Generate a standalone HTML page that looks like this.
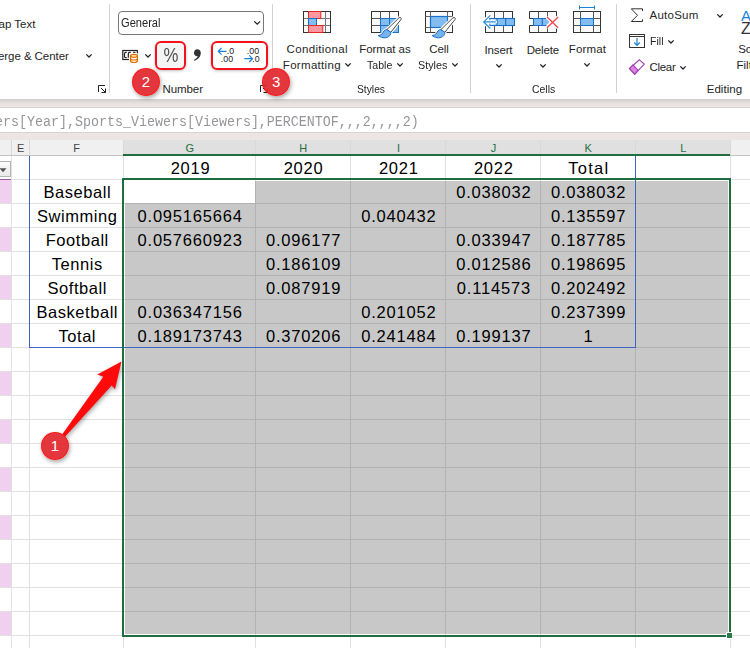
<!DOCTYPE html>
<html lang="en"><head><meta charset="utf-8"><title>Excel</title>
<style>
html,body{margin:0;padding:0;}
body{width:750px;height:648px;overflow:hidden;position:relative;background:#fff;font-family:"Liberation Sans",sans-serif;color:#222;}
.abs{position:absolute;}
svg{position:absolute;overflow:visible;}
.rt{position:absolute;font-size:11.5px;line-height:14px;color:#262626;white-space:nowrap;}
.sep{position:absolute;width:1px;background:#d2d2d2;top:4px;height:89px;}
.cell{position:absolute;height:24px;line-height:24px;font-size:16.5px;color:#000;white-space:nowrap;}
.hdr{position:absolute;top:140px;height:15px;line-height:16px;font-size:11px;text-align:center;color:#444;}
.hl{position:absolute;background:#e1e1e1;}
.gl{position:absolute;background:#b2b2b2;}
.badge{position:absolute;width:26.4px;height:26.4px;border-radius:50%;background:rgba(226,38,45,.92);border:1.8px solid rgba(255,22,22,.96);color:#fff;font-size:15px;line-height:26px;text-indent:0.6px;text-align:center;box-shadow:1px 2px 4px rgba(0,0,0,.35);}
.redbox{position:absolute;border:2px solid #f5111c;border-radius:6px;box-sizing:border-box;box-shadow:0 1px 3px rgba(0,0,0,.25);}
</style></head><body>

<div class="abs" style="left:0;top:180px;width:11px;height:23px;background:#f1cfee;"></div>
<div class="abs" style="left:0;top:228px;width:11px;height:23px;background:#f1cfee;"></div>
<div class="abs" style="left:0;top:276px;width:11px;height:23px;background:#f1cfee;"></div>
<div class="abs" style="left:0;top:324px;width:11px;height:23px;background:#f1cfee;"></div>
<div class="abs" style="left:0;top:372px;width:11px;height:23px;background:#f1cfee;"></div>
<div class="abs" style="left:0;top:420px;width:11px;height:23px;background:#f1cfee;"></div>
<div class="abs" style="left:0;top:468px;width:11px;height:23px;background:#f1cfee;"></div>
<div class="abs" style="left:0;top:516px;width:11px;height:23px;background:#f1cfee;"></div>
<div class="abs" style="left:0;top:564px;width:11px;height:23px;background:#f1cfee;"></div>
<div class="abs" style="left:0;top:612px;width:11px;height:23px;background:#f1cfee;"></div>
<div class="abs" style="left:0;top:140px;width:750px;height:15px;background:#f0f0f0;"></div>
<div class="abs" style="left:123px;top:140px;width:607px;height:15px;background:#e0e0e0;"></div>
<div class="abs" style="left:125px;top:181px;width:603px;height:453px;background:#c8c8c8;"></div>
<div class="abs" style="left:125px;top:180px;width:130px;height:23px;background:#fff;"></div>
<div class="hl" style="left:0;top:179px;width:750px;height:1px;"></div>
<div class="hl" style="left:0;top:203px;width:750px;height:1px;"></div>
<div class="hl" style="left:0;top:227px;width:750px;height:1px;"></div>
<div class="hl" style="left:0;top:251px;width:750px;height:1px;"></div>
<div class="hl" style="left:0;top:275px;width:750px;height:1px;"></div>
<div class="hl" style="left:0;top:299px;width:750px;height:1px;"></div>
<div class="hl" style="left:0;top:323px;width:750px;height:1px;"></div>
<div class="hl" style="left:0;top:347px;width:750px;height:1px;"></div>
<div class="hl" style="left:0;top:371px;width:750px;height:1px;"></div>
<div class="hl" style="left:0;top:395px;width:750px;height:1px;"></div>
<div class="hl" style="left:0;top:419px;width:750px;height:1px;"></div>
<div class="hl" style="left:0;top:443px;width:750px;height:1px;"></div>
<div class="hl" style="left:0;top:467px;width:750px;height:1px;"></div>
<div class="hl" style="left:0;top:491px;width:750px;height:1px;"></div>
<div class="hl" style="left:0;top:515px;width:750px;height:1px;"></div>
<div class="hl" style="left:0;top:539px;width:750px;height:1px;"></div>
<div class="hl" style="left:0;top:563px;width:750px;height:1px;"></div>
<div class="hl" style="left:0;top:587px;width:750px;height:1px;"></div>
<div class="hl" style="left:0;top:611px;width:750px;height:1px;"></div>
<div class="hl" style="left:0;top:635px;width:750px;height:1px;"></div>
<div class="hl" style="left:0;top:659px;width:750px;height:1px;"></div>
<div class="hl" style="left:11px;top:155px;width:1px;height:493px;"></div>
<div class="hl" style="left:29px;top:155px;width:1px;height:493px;"></div>
<div class="hl" style="left:123px;top:155px;width:1px;height:493px;"></div>
<div class="hl" style="left:255px;top:155px;width:1px;height:493px;"></div>
<div class="hl" style="left:350px;top:155px;width:1px;height:493px;"></div>
<div class="hl" style="left:445px;top:155px;width:1px;height:493px;"></div>
<div class="hl" style="left:540px;top:155px;width:1px;height:493px;"></div>
<div class="hl" style="left:635px;top:155px;width:1px;height:493px;"></div>
<div class="hl" style="left:730px;top:155px;width:1px;height:493px;"></div>
<div class="gl" style="left:125px;top:203px;width:603px;height:1px;"></div>
<div class="gl" style="left:125px;top:227px;width:603px;height:1px;"></div>
<div class="gl" style="left:125px;top:251px;width:603px;height:1px;"></div>
<div class="gl" style="left:125px;top:275px;width:603px;height:1px;"></div>
<div class="gl" style="left:125px;top:299px;width:603px;height:1px;"></div>
<div class="gl" style="left:125px;top:323px;width:603px;height:1px;"></div>
<div class="gl" style="left:125px;top:347px;width:603px;height:1px;"></div>
<div class="gl" style="left:125px;top:371px;width:603px;height:1px;"></div>
<div class="gl" style="left:125px;top:395px;width:603px;height:1px;"></div>
<div class="gl" style="left:125px;top:419px;width:603px;height:1px;"></div>
<div class="gl" style="left:125px;top:443px;width:603px;height:1px;"></div>
<div class="gl" style="left:125px;top:467px;width:603px;height:1px;"></div>
<div class="gl" style="left:125px;top:491px;width:603px;height:1px;"></div>
<div class="gl" style="left:125px;top:515px;width:603px;height:1px;"></div>
<div class="gl" style="left:125px;top:539px;width:603px;height:1px;"></div>
<div class="gl" style="left:125px;top:563px;width:603px;height:1px;"></div>
<div class="gl" style="left:125px;top:587px;width:603px;height:1px;"></div>
<div class="gl" style="left:125px;top:611px;width:603px;height:1px;"></div>
<div class="gl" style="left:125px;top:635px;width:603px;height:1px;"></div>
<div class="gl" style="left:255px;top:181px;width:1px;height:453px;"></div>
<div class="gl" style="left:350px;top:181px;width:1px;height:453px;"></div>
<div class="gl" style="left:445px;top:181px;width:1px;height:453px;"></div>
<div class="gl" style="left:540px;top:181px;width:1px;height:453px;"></div>
<div class="gl" style="left:635px;top:181px;width:1px;height:453px;"></div>
<div class="abs" style="left:11px;top:140px;width:1px;height:15px;background:#d9d9d9;"></div>
<div class="abs" style="left:29px;top:140px;width:1px;height:15px;background:#d9d9d9;"></div>
<div class="abs" style="left:123px;top:140px;width:1px;height:15px;background:#d9d9d9;"></div>
<div class="abs" style="left:255px;top:140px;width:1px;height:15px;background:#d9d9d9;"></div>
<div class="abs" style="left:350px;top:140px;width:1px;height:15px;background:#d9d9d9;"></div>
<div class="abs" style="left:445px;top:140px;width:1px;height:15px;background:#d9d9d9;"></div>
<div class="abs" style="left:540px;top:140px;width:1px;height:15px;background:#d9d9d9;"></div>
<div class="abs" style="left:635px;top:140px;width:1px;height:15px;background:#d9d9d9;"></div>
<div class="abs" style="left:730px;top:140px;width:1px;height:15px;background:#d9d9d9;"></div>
<div class="hdr" style="left:11.7px;width:18px;color:#444;">E</div>
<div class="hdr" style="left:29.7px;width:94px;color:#444;">F</div>
<div class="hdr" style="left:123.7px;width:132px;color:#1e6e42;">G</div>
<div class="hdr" style="left:255.7px;width:95px;color:#1e6e42;">H</div>
<div class="hdr" style="left:350.7px;width:95.5px;color:#1e6e42;">I</div>
<div class="hdr" style="left:446.2px;width:94.5px;color:#1e6e42;">J</div>
<div class="hdr" style="left:540.7px;width:95px;color:#1e6e42;">K</div>
<div class="hdr" style="left:635.7px;width:95px;color:#1e6e42;">L</div>
<div class="abs" style="left:0;top:155px;width:750px;height:1px;background:#c2c2c2;"></div>
<div class="abs" style="left:123px;top:154px;width:607px;height:2px;background:#1e6e42;"></div>
<div class="abs" style="left:-6px;top:161px;width:17px;height:16px;border:1px solid #b4b4b4;background:linear-gradient(#fdfdfd,#e9e9e9);box-sizing:border-box;"></div>
<svg style="left:0;top:168px" width="8" height="6" viewBox="0 0 8 6"><path d="M-0.500 0.300H6.500L3 4.300Z" fill="#555"/></svg>
<div class="abs" style="left:0;top:179px;width:11px;height:1px;background:#a05a9c;"></div>
<div class="cell" style="left:170.65px;top:156px;letter-spacing:0.8px;">2019</div>
<div class="cell" style="left:283.65px;top:156px;letter-spacing:0.8px;">2020</div>
<div class="cell" style="left:378.90px;top:156px;letter-spacing:0.8px;">2021</div>
<div class="cell" style="left:473.90px;top:156px;letter-spacing:0.8px;">2022</div>
<div class="cell" style="left:568.17px;top:156px;letter-spacing:1.3px;">Total</div>
<div class="cell" style="left:43.43px;top:180px;letter-spacing:0.55px;">Baseball</div>
<div class="cell" style="left:456.24px;top:180px;letter-spacing:0.8px;">0.038032</div>
<div class="cell" style="left:550.99px;top:180px;letter-spacing:0.8px;">0.038032</div>
<div class="cell" style="left:37.03px;top:204px;letter-spacing:0.55px;">Swimming</div>
<div class="cell" style="left:137.53px;top:204px;letter-spacing:0.8px;">0.095165664</div>
<div class="cell" style="left:361.24px;top:204px;letter-spacing:0.8px;">0.040432</div>
<div class="cell" style="left:550.99px;top:204px;letter-spacing:0.8px;">0.135597</div>
<div class="cell" style="left:45.73px;top:228px;letter-spacing:0.55px;">Football</div>
<div class="cell" style="left:137.53px;top:228px;letter-spacing:0.8px;">0.057660923</div>
<div class="cell" style="left:265.99px;top:228px;letter-spacing:0.8px;">0.096177</div>
<div class="cell" style="left:456.24px;top:228px;letter-spacing:0.8px;">0.033947</div>
<div class="cell" style="left:550.99px;top:228px;letter-spacing:0.8px;">0.187785</div>
<div class="cell" style="left:51.78px;top:252px;letter-spacing:0.55px;">Tennis</div>
<div class="cell" style="left:265.99px;top:252px;letter-spacing:0.8px;">0.186109</div>
<div class="cell" style="left:456.24px;top:252px;letter-spacing:0.8px;">0.012586</div>
<div class="cell" style="left:550.99px;top:252px;letter-spacing:0.8px;">0.198695</div>
<div class="cell" style="left:47.56px;top:276px;letter-spacing:0.55px;">Softball</div>
<div class="cell" style="left:265.99px;top:276px;letter-spacing:0.8px;">0.087919</div>
<div class="cell" style="left:456.86px;top:276px;letter-spacing:0.8px;">0.114573</div>
<div class="cell" style="left:550.99px;top:276px;letter-spacing:0.8px;">0.202492</div>
<div class="cell" style="left:36.46px;top:300px;letter-spacing:0.55px;">Basketball</div>
<div class="cell" style="left:137.53px;top:300px;letter-spacing:0.8px;">0.036347156</div>
<div class="cell" style="left:361.24px;top:300px;letter-spacing:0.8px;">0.201052</div>
<div class="cell" style="left:550.99px;top:300px;letter-spacing:0.8px;">0.237399</div>
<div class="cell" style="left:58.47px;top:324px;letter-spacing:0.55px;">Total</div>
<div class="cell" style="left:137.53px;top:324px;letter-spacing:0.8px;">0.189173743</div>
<div class="cell" style="left:265.99px;top:324px;letter-spacing:0.8px;">0.370206</div>
<div class="cell" style="left:361.24px;top:324px;letter-spacing:0.8px;">0.241484</div>
<div class="cell" style="left:456.24px;top:324px;letter-spacing:0.8px;">0.199137</div>
<div class="cell" style="left:583.61px;top:324px;letter-spacing:0.8px;">1</div>
<div class="abs" style="left:29.3px;top:156px;width:1.2px;height:192px;background:#3a66c4;"></div>
<div class="abs" style="left:29px;top:347px;width:607px;height:1px;background:#3a66c4;"></div>
<div class="abs" style="left:635.3px;top:156px;width:1.2px;height:192px;background:#3a66c4;"></div>
<div class="abs" style="left:122px;top:178px;width:609px;height:459px;border:2px solid #1e6e42;box-sizing:border-box;"></div>
<div class="abs" style="left:726px;top:632px;width:5px;height:5px;background:#2a7b4b;border:1px solid #fff;"></div>
<div class="abs" style="left:0;top:99px;width:750px;height:41px;background:#ebe6e4;"></div>
<div class="abs" style="left:0;top:99px;width:750px;height:7px;background:linear-gradient(#d2cdcb,#e6e1df 60%,#ebe6e4);"></div>
<div class="abs" style="left:-2px;top:107px;width:760px;height:26px;background:#fff;border:1px solid #d8d3d1;box-sizing:border-box;"></div>
<div class="abs" style="left:-5.3px;top:109.5px;height:24px;line-height:24px;font-family:'Liberation Mono',monospace;font-size:14.3px;transform-origin:0 50%;transform:scaleX(0.932);color:#94969a;white-space:pre;">ers[Year],Sports_Viewers[Viewers],PERCENTOF,,,2,,,,2)</div>
<div class="abs" id="ribbon" style="left:0;top:0;width:750px;height:99px;background:#fff;"></div>
<div class="rt" style="left:-1.50px;top:17.02px;letter-spacing:0.022px;font-size:11.5px;">ap Text</div>
<div class="rt" style="left:-2.00px;top:49.02px;letter-spacing:-0.066px;font-size:11.5px;">erge &amp; Center</div>
<svg style="left:86px;top:54px" width="6" height="4" viewBox="0 0 6 4"><path d="M0.3 0.4L3.0 3L5.7 0.4" fill="none" stroke="#222" stroke-width="1.3"/></svg>
<svg style="left:98px;top:85px" width="8" height="8" viewBox="0 0 8 8"><path d="M0.5 7V0.5H7M3 3L7.5 7.500M3.500 7.500H7.500V3.500" fill="none" stroke="#222" stroke-width="1"/></svg>
<div class="sep" style="left:109px;"></div>
<div class="abs" style="left:118px;top:11px;width:146px;height:24px;border:1px solid #777;border-radius:4px;box-sizing:border-box;background:#fff;"></div>
<div class="rt" style="left:121.30px;top:15.67px;font-size:12.5px;transform-origin:0 50%;transform:scaleX(0.8883);">General</div>
<svg style="left:254.3px;top:21px" width="6.4" height="4.2" viewBox="0 0 6.4 4.2"><path d="M0.3 0.4L3.2 3.2L6.1000000000000005 0.4" fill="none" stroke="#222" stroke-width="1.3"/></svg>
<svg style="left:121px;top:49px" width="18" height="15" viewBox="0 0 18 15"><rect x="1.800" y="1.500" width="14.500" height="9" fill="#fff" stroke="#222" stroke-width="1.200"/><path d="M5.700 3.400H4.700C3.800 3.400 3.500 3.900 3.500 4.900V7.200C3.500 8.200 3.800 8.700 4.700 8.700H5.700M9.800 3.400H8.600C7.700 3.400 7.300 3.900 7.300 4.900V8.700M11.900 3.400H14.500" fill="none" stroke="#222" stroke-width="1.200"/><path d="M9.500 6.800V11.800C9.500 12.800 11 13.500 13 13.500S16.500 12.800 16.500 11.800V6.800C16.500 5.800 15 5.200 13 5.200S9.500 5.800 9.500 6.800Z" fill="#fff" stroke="#fff" stroke-width="3"/><path d="M9.500 6.800V11.800C9.500 12.800 11 13.500 13 13.500S16.500 12.800 16.500 11.800V6.800" fill="#fff" stroke="#e06c00" stroke-width="1.200"/><ellipse cx="13" cy="6.800" rx="3.500" ry="1.500" fill="#ffe9b0" stroke="#e06c00" stroke-width="1.200"/><path d="M9.500 9.400C9.500 10.400 11 11 13 11S16.500 10.400 16.500 9.400" fill="none" stroke="#e06c00" stroke-width="1.200"/></svg>
<div class="abs" style="left:157px;top:43px;width:27px;height:25px;background:#f4f4f4;border-radius:4px;box-shadow:inset 0 0 2px 1px #fafafa;"></div>
<div class="abs" style="left:156px;top:43px;width:30px;height:24px;line-height:24px;font-size:19.5px;text-align:center;color:#505050;transform:scaleX(0.86);">%</div>
<svg style="left:192px;top:48px" width="10" height="14" viewBox="0 0 10 14"><path d="M5.300 1.300C7.500 1.300 8.800 2.900 8.800 5C8.800 8.500 6.200 11.500 2.300 12.700L1.900 11.900C4.200 10.800 5.500 9.300 5.700 8.200C3.600 8.500 2 7.100 2 5C2 2.900 3.300 1.300 5.300 1.300Z" fill="#333"/></svg>
<svg style="left:216px;top:45px" width="48" height="20" viewBox="0 0 48 20">
<path d="M2.300 6.300H10.500M5.500 3L2.300 6.300L5.500 9.600" fill="none" stroke="#1b82d6" stroke-width="1.2"/>
<text x="10.800" y="8.600" font-size="8.800" font-family="Liberation Sans, sans-serif" fill="#222">.0</text>
<text x="4.800" y="17" font-size="8.800" font-family="Liberation Sans, sans-serif" fill="#222">.00</text>
<text x="30.800" y="8.600" font-size="8.800" font-family="Liberation Sans, sans-serif" fill="#222">.00</text>
<path d="M28.300 13.700H36.500M33.300 10.400L36.500 13.700L33.300 17" fill="none" stroke="#1b82d6" stroke-width="1.2"/>
<text x="36.300" y="17" font-size="8.800" font-family="Liberation Sans, sans-serif" fill="#222">.0</text>
</svg>

<svg style="left:145.3px;top:54px" width="6" height="4" viewBox="0 0 6 4"><path d="M0.3 0.4L3.0 3L5.7 0.4" fill="none" stroke="#222" stroke-width="1.3"/></svg>
<div class="rt" style="left:162.60px;top:82.02px;letter-spacing:-0.100px;font-size:11.5px;">Number</div>
<svg style="left:260px;top:85px" width="8" height="8" viewBox="0 0 8 8"><path d="M0.5 7V0.5H7M3 3L7.5 7.500M3.500 7.500H7.500V3.500" fill="none" stroke="#222" stroke-width="1"/></svg>
<div class="sep" style="left:272px;"></div>
<svg style="left:303px;top:11px" width="28" height="22" viewBox="0 0 28 22"><rect x="0.5" y="0.5" width="27" height="21" fill="#fbfbfb" stroke="#333"/><path d="M0.5 7.5H27.5M0.5 14.5H27.5M5.500 0.5V21.5M22.500 0.5V21.5" stroke="#777" fill="none"/><rect x="0.5" y="0.5" width="27" height="21" fill="none" stroke="#333"/><rect x="5.5" y="0.5" width="12.300" height="7" fill="#fd97a1" stroke="#e02a1f"/><rect x="5.5" y="7.5" width="8" height="7" fill="#83bdf0" stroke="#1a6fc8"/><rect x="5.5" y="14.5" width="14.300" height="7" fill="#fd97a1" stroke="#e02a1f"/></svg>
<svg style="left:371px;top:11px" width="32" height="28" viewBox="0 0 32 28"><rect x="0.5" y="0.5" width="27" height="21" fill="#fbfbfb" stroke="#333"/><path d="M0.5 7.5H27.5M0.5 14.5H27.5M9.5 0.5V21.5M18.500 0.5V21.5" stroke="#555" fill="none"/><rect x="9.5" y="7.5" width="18" height="14" fill="#83bdf0" stroke="#1a6fc8"/><path d="M9.500 14.500H27.500M18.500 7.500V21.500" stroke="#1a6fc8" fill="none"/><path d="M27.900 6.900C29.300 5.900 31 7.100 30 8.500L19.800 21.300L15.900 18.600Z" fill="#fff" stroke="#fff" stroke-width="3"/><path d="M15.900 18.600L19.800 21.300C20.300 24.500 16.500 27.500 12 26.700C10 26.400 8.300 25.500 7.200 24.600C10.500 24.300 11.500 22.500 12.300 21C13 19.600 14.300 18.600 15.900 18.600Z" fill="#fff" stroke="#fff" stroke-width="2.500"/><path d="M27.900 6.900C29.300 5.900 31 7.100 30 8.500L19.800 21.300L15.900 18.600Z" fill="#fff" stroke="#333" stroke-width="0.9"/><path d="M15.900 18.600L19.800 21.300C20.300 24.500 16.500 27.500 12 26.700C10 26.400 8.300 25.500 7.200 24.600C10.500 24.300 11.500 22.500 12.300 21C13 19.600 14.300 18.600 15.900 18.600Z" fill="#74b3ec" stroke="#1a6fc8" stroke-width="1"/></svg>
<svg style="left:425px;top:11px" width="32" height="28" viewBox="0 0 32 28"><rect x="0.5" y="0.5" width="27" height="21" fill="#fbfbfb" stroke="#333"/><path d="M0.5 5.5H27.5M5.5 0.5V21.5M22.500 0.500V5.500M0.500 16.500H5.500" stroke="#6e625c" fill="none"/><rect x="5.5" y="5.5" width="17" height="11" fill="#83bdf0" stroke="#1a6fc8" stroke-width="1.2"/><path d="M27.900 6.900C29.300 5.900 31 7.100 30 8.500L19.800 21.300L15.900 18.600Z" fill="#fff" stroke="#fff" stroke-width="3"/><path d="M15.900 18.600L19.800 21.300C20.300 24.500 16.500 27.500 12 26.700C10 26.400 8.300 25.500 7.200 24.600C10.500 24.300 11.500 22.500 12.300 21C13 19.600 14.300 18.600 15.900 18.600Z" fill="#fff" stroke="#fff" stroke-width="2.500"/><path d="M27.900 6.900C29.300 5.900 31 7.100 30 8.500L19.800 21.300L15.900 18.600Z" fill="#fff" stroke="#333" stroke-width="0.9"/><path d="M15.900 18.600L19.800 21.300C20.300 24.500 16.500 27.500 12 26.700C10 26.400 8.300 25.500 7.200 24.600C10.500 24.300 11.500 22.500 12.300 21C13 19.600 14.300 18.600 15.900 18.600Z" fill="#74b3ec" stroke="#1a6fc8" stroke-width="1"/></svg>

<div class="rt" style="left:286.60px;top:41.92px;letter-spacing:0.336px;font-size:11.5px;">Conditional</div>
<div class="rt" style="left:282.80px;top:57.62px;letter-spacing:0.316px;font-size:11.5px;">Formatting</div>
<svg style="left:345px;top:63px" width="6" height="4" viewBox="0 0 6 4"><path d="M0.3 0.4L3.0 3L5.7 0.4" fill="none" stroke="#222" stroke-width="1.3"/></svg>
<div class="rt" style="left:359.20px;top:41.92px;letter-spacing:-0.032px;font-size:11.5px;">Format as</div>
<div class="rt" style="left:366.70px;top:57.62px;font-size:11.5px;transform-origin:0 50%;transform:scaleX(0.9203);">Table</div>
<svg style="left:397.3px;top:63px" width="6" height="4" viewBox="0 0 6 4"><path d="M0.3 0.4L3.0 3L5.7 0.4" fill="none" stroke="#222" stroke-width="1.3"/></svg>
<div class="rt" style="left:429.30px;top:41.92px;letter-spacing:-0.104px;font-size:11.5px;">Cell</div>
<div class="rt" style="left:418.10px;top:57.62px;font-size:11.5px;transform-origin:0 50%;transform:scaleX(0.9388);">Styles</div>
<svg style="left:452px;top:63px" width="6" height="4" viewBox="0 0 6 4"><path d="M0.3 0.4L3.0 3L5.7 0.4" fill="none" stroke="#222" stroke-width="1.3"/></svg>
<div class="rt" style="left:356.50px;top:82.02px;font-size:11.5px;transform-origin:0 50%;transform:scaleX(0.8941);">Styles</div>
<div class="sep" style="left:470px;"></div>
<svg style="left:483px;top:11px" width="33" height="22" viewBox="0 0 33 22"><defs><linearGradient id="gi" x1="0" x2="1" y1="0" y2="0"><stop offset="0" stop-color="#ffffff"/><stop offset="1" stop-color="#83bdf0"/></linearGradient></defs><rect x="2.5" y="0.5" width="27" height="21" fill="#fbfbfb" stroke="#333"/><path d="M2.5 7.5H29.5M2.5 14.5H29.5M11.5 0.5V21.5M20.500 0.5V21.5" stroke="#555" fill="none"/><path d="M7.500 3.800L0.500 10.800L7.500 17.800" fill="none" stroke="#fff" stroke-width="3.500"/><rect x="7" y="7.500" width="24.500" height="7" fill="#83bdf0" stroke="#1a6fc8" stroke-width="1.100"/><rect x="7.500" y="8.100" width="6.500" height="5.800" fill="url(#gi)"/><path d="M14 7.500V14.500M22.700 7.500V14.500" stroke="#1a6fc8" stroke-width="1.100"/><path d="M2 10.900H12.500" stroke="#fff" stroke-width="3.200" stroke-linecap="round"/><path d="M7.300 4.300L0.700 10.900L7.300 17.500M1 10.900H12.800" fill="none" stroke="#2b8fdc" stroke-width="1.200"/></svg>
<svg style="left:529px;top:11px" width="33" height="22" viewBox="0 0 33 22"><path d="M4.500 7.500H0.500V0.5H27.500V7.500M27.500 14.500V21.5H0.500V14.500H4.500" fill="#fbfbfb" stroke="#333"/><path d="M9.5 0.5V7.500M18.500 0.5V7.500M9.5 14.5V21.500M18.500 14.5V21.500" stroke="#555" fill="none"/><path d="M4.500 7.500H17.500L20.700 11L17.500 14.500H4.500Z" fill="#83bdf0"/><path d="M17.500 7.500H4.500V14.500H17.500M13.300 7.500V14.500" fill="none" stroke="#1a6fc8" stroke-width="1.100"/><path d="M18 6L29.100 16.800M29.100 6L18 16.800" fill="none" stroke="#fff" stroke-width="3.500"/><path d="M18 6L29.100 16.800M29.100 6L18 16.800" fill="none" stroke="#f0474d" stroke-width="1.300"/></svg>
<svg style="left:573px;top:5px" width="29" height="28" viewBox="0 0 29 28"><path d="M6.500 2.500H21.500M6.500 0.500V4.500M21.500 0.500V4.500" stroke="#1b82d6" fill="none"/><rect x="0.5" y="6.5" width="27" height="21" fill="#fbfbfb" stroke="#333"/><path d="M0.5 13.500H27.5M0.5 20.500H27.5M7.5 6.5V27.5M20.500 6.5V27.5" stroke="#555" fill="none"/><rect x="7.5" y="13.5" width="13" height="7" fill="#83bdf0" stroke="#1a6fc8"/></svg>

<div class="rt" style="left:484.50px;top:43.02px;letter-spacing:-0.152px;font-size:11.5px;">Insert</div>
<svg style="left:496px;top:63.5px" width="6" height="4" viewBox="0 0 6 4"><path d="M0.3 0.4L3.0 3L5.7 0.4" fill="none" stroke="#222" stroke-width="1.3"/></svg>
<div class="rt" style="left:526.70px;top:43.02px;letter-spacing:-0.148px;font-size:11.5px;">Delete</div>
<svg style="left:539.5px;top:63.5px" width="6" height="4" viewBox="0 0 6 4"><path d="M0.3 0.4L3.0 3L5.7 0.4" fill="none" stroke="#222" stroke-width="1.3"/></svg>
<div class="rt" style="left:568.80px;top:42.32px;letter-spacing:0.137px;font-size:11.5px;">Format</div>
<svg style="left:583.7px;top:63px" width="6" height="4" viewBox="0 0 6 4"><path d="M0.3 0.4L3.0 3L5.7 0.4" fill="none" stroke="#222" stroke-width="1.3"/></svg>
<div class="rt" style="left:531.50px;top:82.02px;font-size:11.5px;transform-origin:0 50%;transform:scaleX(0.9076);">Cells</div>
<div class="sep" style="left:616px;"></div>
<svg style="left:630px;top:8px" width="14" height="15" viewBox="0 0 14 15"><path d="M12.500 3V0.800H1.300L7.500 7.300L1.300 13.500H12.500V11.300" fill="none" stroke="#333" stroke-width="1"/></svg>
<svg style="left:629px;top:34px" width="17" height="14" viewBox="0 0 17 14"><rect x="0.5" y="0.5" width="15" height="13" fill="#fff" stroke="#333"/><path d="M0.500 2.500H15.500" stroke="#333"/><path d="M8 4V11.200M5.200 8.500L8 11.400L10.800 8.500" fill="none" stroke="#1b82d6" stroke-width="1.2"/></svg>
<svg style="left:628px;top:58px" width="18" height="18" viewBox="0 0 18 18"><path d="M11.400 1.800L16.300 6.100L6.700 16.200L1.500 10.500Z" fill="#fff" stroke="#a23db1" stroke-width="1.1"/><path d="M5 6.800L10.200 12.500L6.700 16.200L1.500 10.500Z" fill="#d982e2" stroke="#a23db1" stroke-width="1.1"/></svg>
<div class="abs" style="left:741px;top:7.500px;font-size:15px;line-height:15px;color:#1b82d6;">A</div>
<div class="abs" style="left:741px;top:21px;font-size:16px;line-height:16px;color:#333;">Z</div>

<div class="rt" style="left:649.50px;top:8.42px;letter-spacing:0.250px;font-size:11.5px;">AutoSum</div>
<svg style="left:716.5px;top:14px" width="6" height="4" viewBox="0 0 6 4"><path d="M0.3 0.4L3.0 3L5.7 0.4" fill="none" stroke="#222" stroke-width="1.3"/></svg>
<div class="rt" style="left:649.80px;top:34.42px;font-size:11.5px;transform-origin:0 50%;transform:scaleX(0.9190);">Fill</div>
<svg style="left:667.7px;top:40px" width="6" height="4" viewBox="0 0 6 4"><path d="M0.3 0.4L3.0 3L5.7 0.4" fill="none" stroke="#222" stroke-width="1.3"/></svg>
<div class="rt" style="left:649.50px;top:60.42px;letter-spacing:-0.295px;font-size:11.5px;">Clear</div>
<svg style="left:679.8px;top:66px" width="6" height="4" viewBox="0 0 6 4"><path d="M0.3 0.4L3.0 3L5.7 0.4" fill="none" stroke="#222" stroke-width="1.3"/></svg>
<div class="rt" style="left:738.20px;top:42.02px;letter-spacing:0.000px;font-size:11.5px;">Sort &amp;</div>
<div class="rt" style="left:736.50px;top:57.52px;letter-spacing:0.000px;font-size:11.5px;">Filter</div>
<div class="rt" style="left:706.70px;top:81.62px;letter-spacing:0.056px;font-size:11.5px;">Editing</div>
<div class="redbox" style="left:155px;top:41px;width:31px;height:29px;"></div>
<div class="redbox" style="left:211px;top:41px;width:57px;height:29px;"></div>
<svg style="left:0;top:340px;filter:drop-shadow(1px 2px 2px rgba(0,0,0,.35));" width="160" height="140" viewBox="0 340 160 140"><path d="M121.500 361.500L97.300 374.600L103.300 376.800L62.300 434.300L65 436.800L111.700 385.400L115 389.200Z" fill="#ff0a0a"/></svg>
<div class="badge" style="left:40.500px;top:431.500px;">1</div>
<div class="badge" style="left:131.500px;top:67.700px;">2</div>
<div class="badge" style="left:261.700px;top:67.700px;">3</div>

</body></html>
